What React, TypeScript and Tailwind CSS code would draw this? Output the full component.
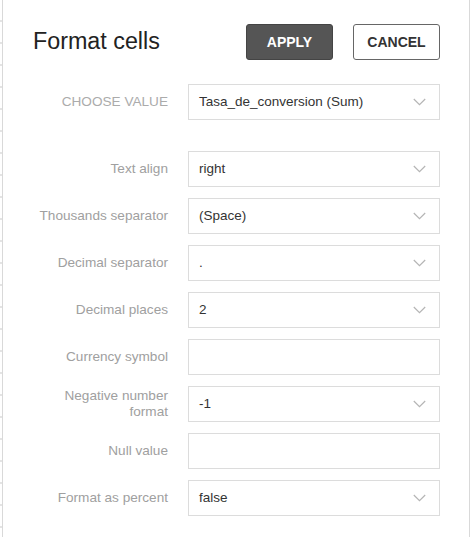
import React from "react";

const Chevron = () => (
  <svg width="13" height="8" viewBox="0 0 13 8" fill="none" className="shrink-0">
    <path d="M0.8 1 L6.5 6.6 L12.2 1" stroke="#b5b5b5" strokeWidth="1.2" />
  </svg>
);

type Row = { label: string; value?: string; select: boolean };

const rows: Row[] = [
  { label: "Text align", value: "right", select: true },
  { label: "Thousands separator", value: "(Space)", select: true },
  { label: "Decimal separator", value: ".", select: true },
  { label: "Decimal places", value: "2", select: true },
  { label: "Currency symbol", value: "", select: false },
  { label: "Negative number format", value: "-1", select: true },
  { label: "Null value", value: "", select: false },
  { label: "Format as percent", value: "false", select: true },
];

const Field = ({ value, select }: { value?: string; select: boolean }) => (
  <div className="flex-1 h-[36px] border border-[#dcdcdc] bg-white flex items-center pl-[10px] pr-[13px] text-[13.5px] text-[#333]">
    <span className="flex-1">{value}</span>
    {select && <Chevron />}
  </div>
);

export default function App() {
  return (
    <div className="w-[474px] h-[537px] bg-white flex font-['Liberation_Sans',Arial,sans-serif] overflow-hidden">
      <div className="w-[2px] h-full bg-[repeating-linear-gradient(to_bottom,#ffffff_0px,#ffffff_20px,#e4e4e4_20px,#e4e4e4_22px)]" />
      <div className="w-[468px] h-full border-l border-r border-[#d9d9d9] pl-[30px] pr-[29px] pt-[24px]">
        <div className="flex items-center h-[36px]">
          <div className="flex-1 text-[23.3px] text-[#222] leading-none">Format cells</div>
          <button className="w-[87px] h-[36px] rounded-[3px] bg-[#555555] border border-[#444] text-white font-bold text-[14px]">
            APPLY
          </button>
          <button className="ml-[20px] w-[87px] h-[36px] rounded-[3px] bg-white border border-[#666] text-[#333] font-bold text-[14px]">
            CANCEL
          </button>
        </div>
        <div className="flex items-center gap-[20px] mt-[24px]">
          <div className="w-[135px] text-right text-[13.6px] text-[#ababab] uppercase">Choose value</div>
          <Field value="Tasa_de_conversion (Sum)" select />
        </div>
        <div className="flex flex-col gap-[11px] mt-[31px]">
          {rows.map((r) => (
            <div key={r.label} className="flex items-center gap-[20px]">
              <div className="w-[135px] text-right text-[13.6px] leading-[16px] text-[#a0a0a0]">{r.label}</div>
              <Field value={r.value} select={r.select} />
            </div>
          ))}
        </div>
      </div>
      <div className="flex-1" />
    </div>
  );
}
